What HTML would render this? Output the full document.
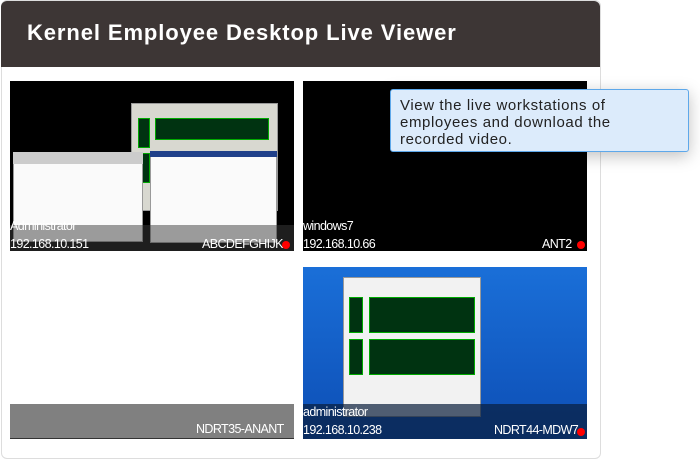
<!DOCTYPE html>
<html><head><style>
*{margin:0;padding:0;box-sizing:border-box}
body{width:700px;height:460px;background:#fff;position:relative;overflow:hidden;font-family:"Liberation Sans",sans-serif}
.card{position:absolute;left:1px;top:0;width:600px;height:459px;border:1px solid #ddd;border-radius:6px;background:#fff}
.hdr{position:absolute;left:1px;top:1px;width:599px;height:66px;background:#3d3635;border-radius:6px 6px 0 0}
.hdr h1{position:absolute;left:26px;top:19px;color:#fff;font-size:22px;font-weight:bold;letter-spacing:0.9px;white-space:nowrap}
.tile{position:absolute;width:284px;overflow:hidden}
.lbl{position:absolute;color:#fff;font-size:12.5px;letter-spacing:-0.6px}
.dot{position:absolute;width:8px;height:8px;border-radius:50%;background:#f00}
.win{position:absolute;background:#e8e8e4;border:1px solid #999}
.graph{position:absolute;background:#031;border:1px solid #0a0}
.tip{position:absolute;left:390px;top:89px;width:299px;height:63px;background:#dcebfb;border:1px solid #5ea8ea;border-radius:3px;box-shadow:0 4px 16px rgba(0,0,0,.25);padding:7px 9px;font-size:15px;line-height:17px;color:#222;letter-spacing:0.6px}
.tip span{display:block;width:250px}
</style></head><body>
<div class="card"></div>
<div class="hdr"><h1>Kernel Employee Desktop Live Viewer</h1></div>

<div class="tile" style="left:10px;top:81px;height:170px;background:#000">
 <div class="win" style="left:121px;top:22px;width:147px;height:108px;background:#d8d8d0"></div>
 <div class="graph" style="left:145px;top:37px;width:114px;height:22px"></div>
 <div class="graph" style="left:128px;top:37px;width:12px;height:30px"></div>
 <div class="graph" style="left:128px;top:72px;width:12px;height:30px"></div>
 <div class="win" style="left:3px;top:71px;width:130px;height:90px;background:#fafafa"></div>
 <div style="position:absolute;left:3px;top:71px;width:130px;height:12px;background:#ccc"></div>
 <div class="win" style="left:140px;top:70px;width:127px;height:92px;background:#fafafa"></div>
 <div style="position:absolute;left:140px;top:70px;width:127px;height:6px;background:#20408a"></div>
 <div style="position:absolute;left:0;top:144px;width:284px;height:26px;background:rgba(60,60,60,.5)"></div>
 <div class="lbl" style="left:0;top:138px">Administrator</div>
 <div class="lbl" style="left:0;top:156px">192.168.10.151</div>
 <div class="lbl" style="left:192px;top:156px">ABCDEFGHIJK</div>
 <div class="dot" style="left:272px;top:160px"></div>
</div>

<div class="tile" style="left:303px;top:81px;height:170px;background:#000">
 <div class="lbl" style="left:0;top:138px">windows7</div>
 <div class="lbl" style="left:0;top:156px">192.168.10.66</div>
 <div class="lbl" style="left:239px;top:156px">ANT2</div>
 <div class="dot" style="left:274px;top:160px"></div>
</div>

<div class="tile" style="left:10px;top:404px;height:35px;background:#808080;border-bottom:1px solid #333">
 <div class="lbl" style="left:186px;top:18px">NDRT35-ANANT</div>
</div>

<div class="tile" style="left:303px;top:267px;height:172px;background:linear-gradient(180deg,#1a6fd8,#0d4eb5)">
 <div class="win" style="left:40px;top:10px;width:138px;height:140px;background:#f2f2f2"></div>
 <div class="graph" style="left:66px;top:30px;width:106px;height:36px"></div>
 <div class="graph" style="left:66px;top:72px;width:106px;height:36px"></div>
 <div class="graph" style="left:46px;top:30px;width:14px;height:36px"></div>
 <div class="graph" style="left:46px;top:72px;width:14px;height:36px"></div>
 <div style="position:absolute;left:0;top:137px;width:284px;height:35px;background:rgba(10,30,60,.7)"></div>
 <div class="lbl" style="left:0;top:138px">administrator</div>
 <div class="lbl" style="left:0;top:156px">192.168.10.238</div>
 <div class="lbl" style="left:191px;top:156px">NDRT44-MDW7</div>
 <div class="dot" style="left:274px;top:161px"></div>
</div>

<div class="tip"><span>View the live workstations of employees and download the recorded video.</span></div>
</body></html>
